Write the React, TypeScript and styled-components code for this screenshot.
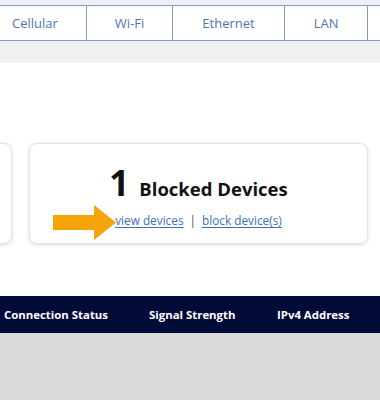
import React from "react";
import styled, { createGlobalStyle } from "styled-components";

const Global = createGlobalStyle`
  html, body { margin: 0; padding: 0; }
  body {
    background: #d9dadb;
    font-family: "Open Sans", "Noto Sans", sans-serif;
    overflow: hidden;
  }
`;

const Page = styled.div`
  width: 380px;
  height: 400px;
  overflow: hidden;
  display: flex;
  flex-direction: column;
  background: #d9dadb;
`;

const TopArea = styled.div`
  background: #f0f0f0;
  padding-top: 5px;
  padding-bottom: 22px;
`;

const TabBar = styled.div`
  display: flex;
  margin-left: -16px;
  height: 34px;
  background: #ffffff;
  border-top: 1px solid #7d9dca;
  border-bottom: 1px solid #7d9dca;
  white-space: nowrap;
`;

const Tab = styled.div<{ $pad: number }>`
  display: flex;
  align-items: center;
  justify-content: center;
  padding: 0 ${(p) => p.$pad}px;
  border-right: 1.5px solid #7d9dca;
  color: #4f77ad;
  font-size: 13px;
  flex: none;
`;

const Main = styled.div`
  background: #ffffff;
  height: 233px;
  padding-top: 80px;
  box-sizing: border-box;
  overflow: hidden;
`;

const CardRow = styled.div`
  display: grid;
  grid-template-columns: 339px 339px;
  gap: 17px;
  margin-left: -327px;
`;

const Card = styled.div`
  position: relative;
  height: 101px;
  box-sizing: border-box;
  background: #ffffff;
  border: 1px solid #e4e4e4;
  border-radius: 8px;
  box-shadow: 0 1px 4px rgba(0, 0, 0, 0.13);
  display: flex;
  flex-direction: column;
  align-items: center;
  padding-top: 18px;
`;

const CountRow = styled.div`
  display: flex;
  align-items: baseline;
  gap: 10px;
  color: #111111;
`;

const Count = styled.span`
  font-size: 35px;
  font-weight: 700;
  line-height: 42px;
`;

const Label = styled.span`
  font-size: 18.5px;
  font-weight: 700;
`;

const Links = styled.div`
  margin-top: 8px;
  font-size: 11.8px;
  color: #555;
  display: flex;
  gap: 6px;
`;

const Link = styled.a`
  color: #3d6fb6;
  text-decoration: underline;
  text-underline-offset: 2px;
`;

const Arrow = styled.svg`
  position: absolute;
  left: 23px;
  top: 61px;
`;

const HeaderBar = styled.div`
  display: flex;
  align-items: center;
  height: 37px;
  background: #020a38;
  padding-left: 4px;
  color: #ffffff;
  font-size: 11.4px;
  font-weight: 700;
  white-space: nowrap;
`;

const HeaderCell = styled.div<{ $w: number }>`
  width: ${(p) => p.$w}px;
  flex: none;
`;

export default function App() {
  return (
    <Page>
      <Global />
      <TopArea>
        <TabBar>
          <Tab $pad={28}>Cellular</Tab>
          <Tab $pad={28}>Wi-Fi</Tab>
          <Tab $pad={29}>Ethernet</Tab>
          <Tab $pad={29}>LAN</Tab>
          <Tab $pad={28} />
        </TabBar>
      </TopArea>
      <Main>
        <CardRow>
          <Card />
          <Card>
            <CountRow>
              <Count>1</Count>
              <Label>Blocked Devices</Label>
            </CountRow>
            <Links>
              <Link href="#">view devices</Link>
              <span>|</span>
              <Link href="#">block device(s)</Link>
            </Links>
            <Arrow width="63" height="35" viewBox="0 0 63 35">
              <polygon points="0,10 41,10 41,0 63,17.5 41,35 41,25 0,25" fill="#f5a50a" />
            </Arrow>
          </Card>
        </CardRow>
      </Main>
      <HeaderBar>
        <HeaderCell $w={145}>Connection Status</HeaderCell>
        <HeaderCell $w={128}>Signal Strength</HeaderCell>
        <HeaderCell $w={120}>IPv4 Address</HeaderCell>
      </HeaderBar>
    </Page>
  );
}
